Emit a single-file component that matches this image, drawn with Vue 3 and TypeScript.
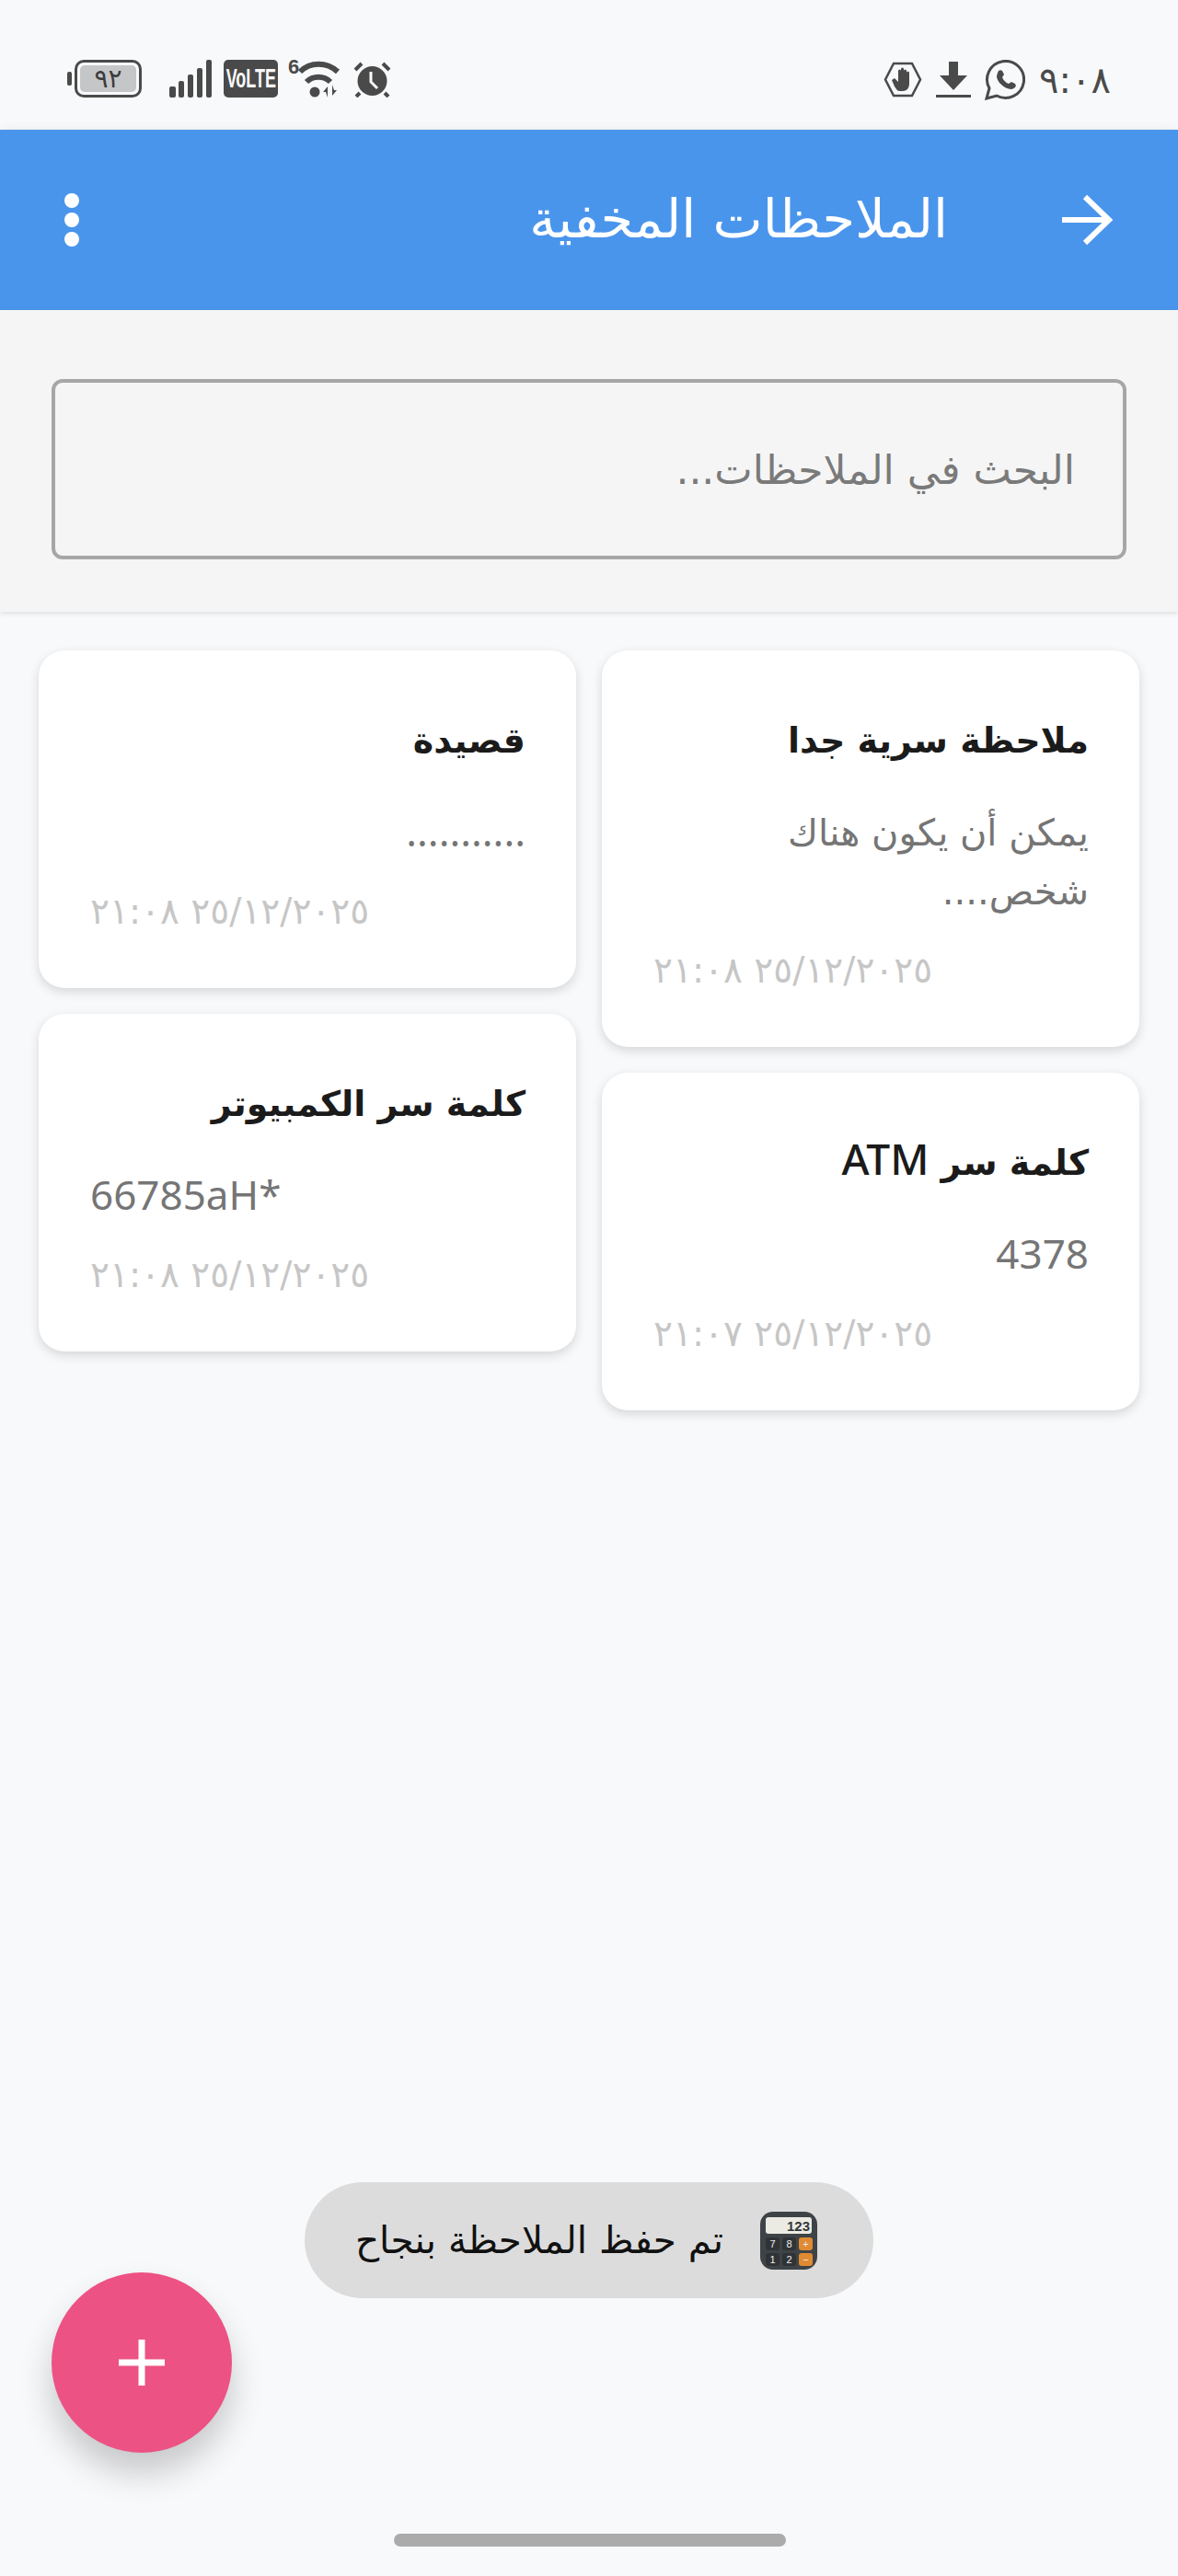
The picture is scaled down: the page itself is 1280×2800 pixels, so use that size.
<script setup lang="ts">
interface Note {
  title: string;
  titleLatin?: string;
  body: string;
  date: string;
  latin?: boolean;
  ltr?: boolean;
}

const rightColumn: Note[] = [
  { title: 'ملاحظة سرية جدا', body: 'يمكن أن يكون هناك شخص....', date: '٢٥/١٢/٢٠٢٥ ٢١:٠٨' },
  { title: 'كلمة سر', titleLatin: 'ATM', body: '4378', date: '٢٥/١٢/٢٠٢٥ ٢١:٠٧', latin: true },
];

const leftColumn: Note[] = [
  { title: 'قصيدة', body: '...........', date: '٢٥/١٢/٢٠٢٥ ٢١:٠٨', latin: true },
  { title: 'كلمة سر الكمبيوتر', body: '66785aH*', date: '٢٥/١٢/٢٠٢٥ ٢١:٠٨', latin: true, ltr: true },
];

const columns = [rightColumn, leftColumn];
</script>

<template>
  <div class="page" dir="rtl">
    <div class="status" dir="ltr">
      <div class="status-left">
        <div class="battery">
          <span class="battery-tip"></span>
          <span class="battery-body">
            <span class="battery-fill"></span>
            <span class="battery-text">٩٢</span>
          </span>
        </div>
        <svg class="ic-signal" width="46" height="41" viewBox="0 0 46 41" fill="#4a4a4a">
          <rect x="0" y="29" width="7" height="12" rx="2" />
          <rect x="10" y="23" width="6" height="18" rx="2" />
          <rect x="20" y="16" width="6" height="25" rx="2" />
          <rect x="30" y="9" width="6" height="32" rx="2" />
          <rect x="40" y="0" width="6" height="41" rx="2" />
        </svg>
        <div class="volte"><span>VoLTE</span></div>
        <svg class="ic-wifi" width="57" height="43" viewBox="0 0 57 43">
          <text x="0" y="17" class="wifi-six">6</text>
          <path d="M13 15C24 4 42 4 54 15" fill="none" stroke="#4a4a4a" stroke-width="6" />
          <path d="M20 26C27 19 39 19 46 26" fill="none" stroke="#4a4a4a" stroke-width="6" />
          <circle cx="29" cy="37" r="5.500" fill="#4a4a4a" />
          <path d="M43 43V31l-5 6h3zM48 29v12l5-6h-3z" fill="#4a4a4a" />
        </svg>
        <svg class="ic-alarm" width="41" height="39" viewBox="0 0 41 39">
          <circle cx="20.500" cy="21" r="16" fill="#4a4a4a" />
          <path d="M2 9 9 2M39 9 32 2M7 34l-4 4M34 34l4 4" stroke="#4a4a4a" stroke-width="4" fill="none" />
          <path d="M19 11v11l7 7" fill="none" stroke="#f8f9fb" stroke-width="3" />
        </svg>
      </div>
      <div class="status-right">
        <svg class="ic-low" width="42" height="39" viewBox="0 0 42 39">
          <path d="M11 2h20l9 17.500-9 17.500H11L2 19.500z" fill="none" stroke="#4a4a4a" stroke-width="2.500" />
          <path d="M9 20l3-2 4 4V10a1.500 1.500 0 0 1 3 0V8a1.500 1.500 0 0 1 3 0v2a1.500 1.500 0 0 1 3 0v2a1.500 1.500 0 0 1 3 0v12c0 5-3 8-7 8h-3c-3 0-4-2-6-5z" fill="#4a4a4a" />
        </svg>
        <svg class="ic-low" width="38" height="39" viewBox="0 0 38 39">
          <path d="M14 0h10v15h10L19 31 4 15h10z" fill="#4a4a4a" />
          <rect x="0" y="36" width="38" height="3" fill="#4a4a4a" />
        </svg>
        <svg width="44" height="44" viewBox="0 0 44 44">
          <path d="M2 42l3-11A20 20 0 1 1 13 39z" fill="none" stroke="#4a4a4a" stroke-width="3" />
          <path d="M15 12c1-1 3-1 4 0l2 4-2 3c1 3 4 6 7 7l3-2 4 2c1 1 1 3 0 4-3 3-7 2-11 0-5-3-8-7-9-11 0-3 1-5 2-7z" fill="#4a4a4a" />
        </svg>
        <span class="clock">٩:٠٨</span>
      </div>
    </div>

    <header class="appbar">
      <svg class="arrow" width="58" height="56" viewBox="0 0 58 56">
        <path d="M2 28h50M27 3l26 25-26 25" fill="none" stroke="#fff" stroke-width="6" />
      </svg>
      <h1 class="appbar-title">الملاحظات المخفية</h1>
      <div class="dots"><span></span><span></span><span></span></div>
    </header>

    <section class="search">
      <div class="search-box">البحث في الملاحظات...</div>
    </section>

    <main class="notes">
      <div v-for="(col, i) in columns" :key="i" class="col">
        <article v-for="note in col" :key="note.date + note.title" class="card">
          <h2 class="card-title">
            {{ note.title }}
            <span v-if="note.titleLatin" class="title-latin">{{ note.titleLatin }}</span>
          </h2>
          <p class="card-body" :class="{ latin: note.latin, ltr: note.ltr }">{{ note.body }}</p>
          <div class="card-date">{{ note.date }}</div>
        </article>
      </div>
    </main>

    <div class="toast">
      <svg class="calc" width="62" height="63" viewBox="0 0 62 63">
        <rect width="62" height="63" rx="14" fill="#3e4347" />
        <rect x="6" y="6" width="50" height="18" rx="3" fill="#ecebe3" />
        <text x="54" y="21" text-anchor="end" class="calc-screen">123</text>
        <rect x="6" y="28" width="15" height="14" rx="3" fill="#2f3336" />
        <rect x="24" y="28" width="15" height="14" rx="3" fill="#2f3336" />
        <rect x="42" y="28" width="15" height="14" rx="3" fill="#e08a33" />
        <rect x="6" y="45" width="15" height="14" rx="3" fill="#2f3336" />
        <rect x="24" y="45" width="15" height="14" rx="3" fill="#2f3336" />
        <rect x="42" y="45" width="15" height="14" rx="3" fill="#e08a33" />
        <text x="13.500" y="39" text-anchor="middle" class="calc-key">7</text>
        <text x="31.500" y="39" text-anchor="middle" class="calc-key">8</text>
        <text x="49.500" y="39" text-anchor="middle" class="calc-key">+</text>
        <text x="13.500" y="56" text-anchor="middle" class="calc-key">1</text>
        <text x="31.500" y="56" text-anchor="middle" class="calc-key">2</text>
        <text x="49.500" y="56" text-anchor="middle" class="calc-key">−</text>
      </svg>
      <span class="toast-text">تم حفظ الملاحظة بنجاح</span>
    </div>

    <button class="fab" type="button" aria-label="add">
      <svg width="50" height="50" viewBox="0 0 50 50">
        <path d="M25 0v50M0 25h50" stroke="#fff" stroke-width="7" />
      </svg>
    </button>

    <div class="home-bar"></div>
  </div>
</template>

<style scoped>
.page {
  position: relative;
  width: 1280px;
  height: 2800px;
  overflow: hidden;
  background: #f8f9fb;
  font-family: "DejaVu Sans", sans-serif;
}

.status {
  height: 141px;
  box-sizing: border-box;
  padding: 65px 73px 0;
  display: flex;
  justify-content: space-between;
  align-items: flex-start;
}
.status-left,
.status-right {
  display: flex;
  align-items: flex-start;
}
.battery {
  display: flex;
  align-items: center;
  gap: 3px;
  height: 41px;
  margin-right: 30px;
}
.battery-tip {
  width: 5px;
  height: 15px;
  border-radius: 2px;
  background: #4a4a4a;
}
.battery-body {
  position: relative;
  width: 73px;
  height: 41px;
  box-sizing: border-box;
  border: 3px solid #4a4a4a;
  border-radius: 10px;
  padding: 3px;
  display: flex;
  justify-content: center;
  align-items: center;
}
.battery-fill {
  position: absolute;
  inset: 3px;
  border-radius: 5px;
  background: #c5c6c8;
}
.battery-text {
  position: relative;
  font-size: 28px;
  line-height: 1;
  color: #3c3c3c;
}
.ic-signal {
  margin-right: 13px;
}
.volte {
  flex: none;
  width: 59px;
  height: 41px;
  border-radius: 5px;
  background: #4a4a4a;
  color: #f8f9fb;
  display: flex;
  justify-content: center;
  margin-right: 11px;
}
.volte span {
  display: block;
  font: 700 29px/41px "Liberation Sans", sans-serif;
  transform: scaleX(0.62);
}
.ic-wifi {
  margin-top: -2px;
  margin-right: 14px;
  overflow: visible;
}
.wifi-six {
  font: 700 22px "Liberation Sans", sans-serif;
  fill: #4a4a4a;
}
.ic-alarm {
  margin-top: 2px;
}
.status-right {
  gap: 15px;
}
.ic-low {
  margin-top: 2px;
}
.clock {
  font-size: 40px;
  line-height: 44px;
  color: #4a4a4a;
  letter-spacing: 1px;
}

.appbar {
  position: relative;
  height: 196px;
  box-sizing: border-box;
  padding: 0 70px;
  background: #4a95ec;
  color: #fff;
  display: flex;
  align-items: center;
  box-shadow: 0 3px 12px rgba(0, 0, 0, 0.12);
}
.appbar-title {
  margin: 0 122px 0 0;
  font-size: 57.500px;
  line-height: 72px;
  font-weight: 400;
  flex: 1;
}
.dots {
  display: flex;
  flex-direction: column;
  gap: 5px;
}
.dots span {
  width: 16px;
  height: 16px;
  border-radius: 50%;
  background: #fff;
}

.search {
  position: relative;
  height: 328px;
  box-sizing: border-box;
  padding: 75px 56px 57px;
  background: #f5f5f5;
  box-shadow: 0 2px 5px rgba(0, 0, 0, 0.1);
}
.search-box {
  height: 196px;
  box-sizing: border-box;
  border: 4px solid #a6a6a6;
  border-radius: 12px;
  padding: 0 52px;
  display: flex;
  align-items: center;
  color: #7a7a7a;
  font-size: 44px;
}

.notes {
  display: flex;
  gap: 28px;
  padding: 42px 42px 0;
}
.col {
  flex: 0 0 584px;
  display: flex;
  flex-direction: column;
  gap: 28px;
}
.card {
  box-sizing: border-box;
  padding: 56px 55px 59px 56px;
  background: #fff;
  border-radius: 28px;
  box-shadow: 0 4px 12px rgba(0, 0, 0, 0.14);
}
.card-title {
  margin: 0;
  height: 84px;
  font-size: 38px;
  line-height: 84px;
  font-weight: 700;
  color: #1b1b1b;
  white-space: nowrap;
}
.title-latin {
  font-family: "Noto Sans", sans-serif;
  font-size: 46px;
  line-height: 0;
  font-weight: 500;
}
.card-body {
  margin: 26px 0 0;
  font-size: 40px;
  line-height: 64px;
  color: #757575;
}
.card-body.latin {
  font-family: "Noto Sans", sans-serif;
  font-size: 44px;
  margin-top: 24px;
  padding-bottom: 2px;
}
.card-body.ltr {
  direction: ltr;
  text-align: left;
}
.card-date {
  margin-top: 30px;
  font-size: 39px;
  line-height: 48px;
  color: #c6c6c6;
  text-align: left;
}

.toast {
  position: absolute;
  left: 331px;
  top: 2372px;
  width: 618px;
  height: 126px;
  box-sizing: border-box;
  padding: 0 61px 0 30px;
  background: #dcdcdc;
  border-radius: 63px;
  display: flex;
  align-items: center;
  gap: 40px;
}
.calc {
  flex: none;
  direction: ltr;
}
.toast-text {
  font-size: 40.500px;
  color: #111;
  white-space: nowrap;
}
.calc-screen {
  font: 700 15px "Liberation Sans", sans-serif;
  fill: #33373a;
  direction: ltr;
}
.calc-key {
  font: 400 11px "Liberation Sans", sans-serif;
  fill: #f0f0f0;
}

.fab {
  position: absolute;
  left: 56px;
  top: 2470px;
  width: 196px;
  height: 196px;
  padding: 0;
  border: 0;
  border-radius: 50%;
  background: #ec5283;
  display: flex;
  align-items: center;
  justify-content: center;
  box-shadow: 0 22px 36px rgba(0, 0, 0, 0.2);
}

.home-bar {
  position: absolute;
  left: 428px;
  top: 2754px;
  width: 426px;
  height: 14px;
  border-radius: 7px;
  background: #ababab;
}
</style>
